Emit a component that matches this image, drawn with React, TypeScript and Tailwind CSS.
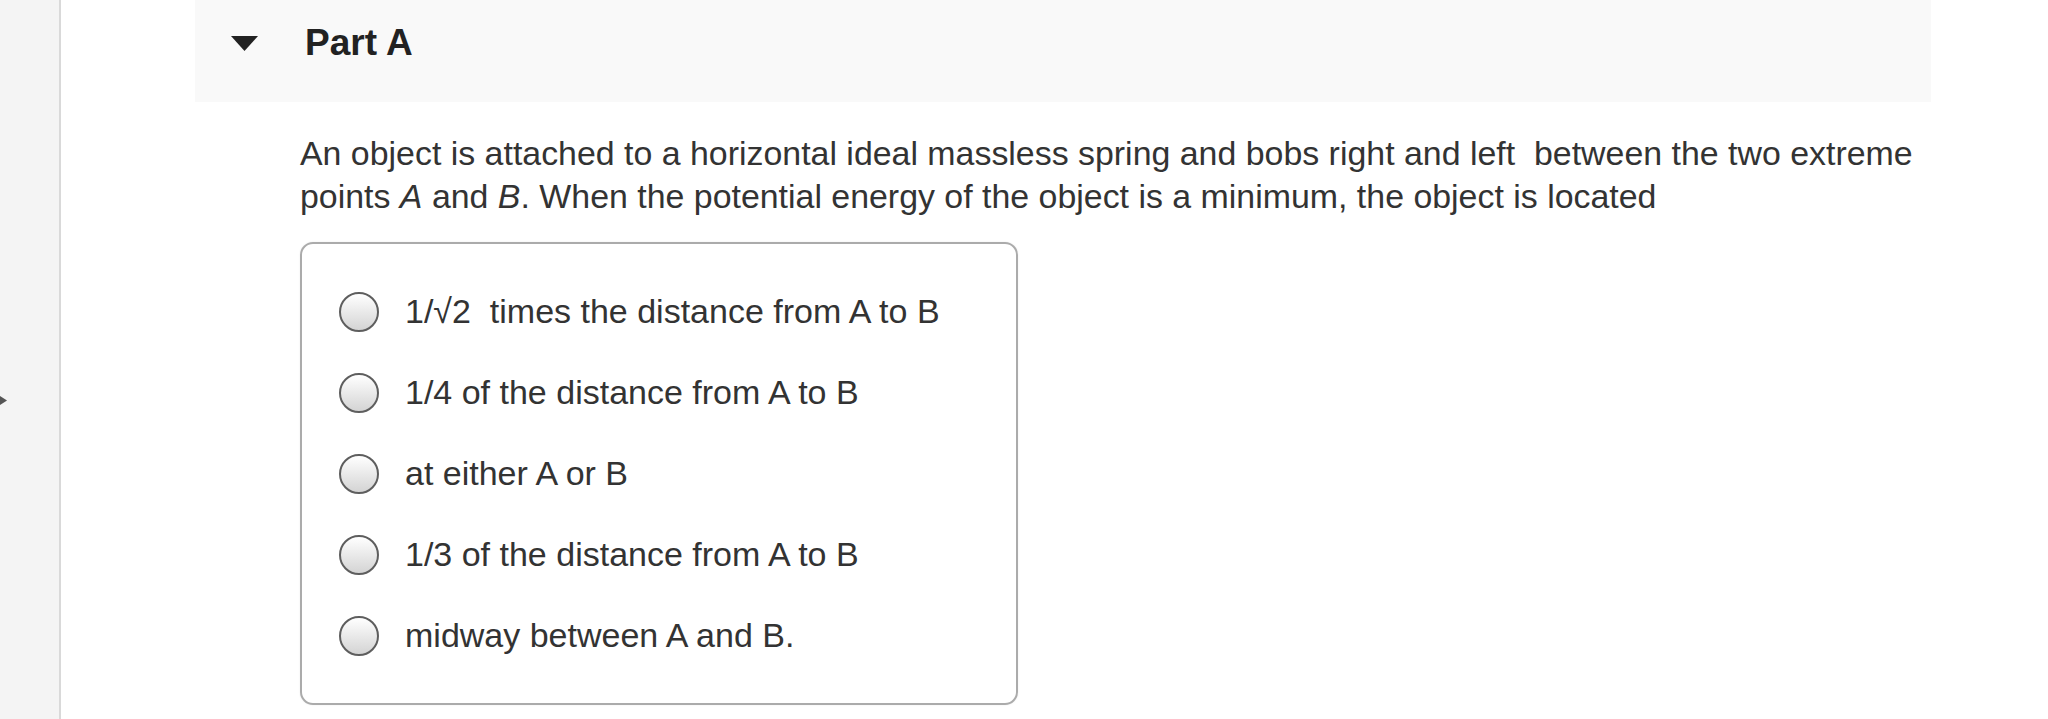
import React from "react"

const options = [
	"1/\u221A2\u00A0 times the distance from A to B",
	"1/4 of the distance from A to B",
	"at either A or B",
	"1/3 of the distance from A to B",
	"midway between A and B.",
]

const Radio = () => (
	<span className="block h-[40px] w-[40px] shrink-0 rounded-full border-2 border-[#5e5e5e] bg-linear-to-b from-white to-[#d4d4d4]" />
)

export default function App() {
	return (
		<div className="flex h-[719px] w-full overflow-hidden bg-white font-['Liberation_Sans',Arial,sans-serif]">
			<aside className="w-[61px] shrink-0 border-r-2 border-[#d9d9d9] bg-[#f4f4f4] pt-[396px]">
				<svg width="7" height="9" viewBox="0 0 7 9">
					<path d="M0 0 L7 4.5 L0 9 Z" fill="#555" />
				</svg>
			</aside>
			<main className="ml-[134px] w-[1736px] shrink-0">
				<header className="flex h-[102px] items-center bg-[#f9f9f9] pb-[16px]">
					<svg className="ml-[36px]" width="27" height="15" viewBox="0 0 27 15">
						<path d="M0 0 H27 L13.5 15 Z" fill="#222" />
					</svg>
					<h2 className="ml-[47px] text-[37px] font-bold text-[#222]">Part A</h2>
				</header>
				<section className="pl-[105px] pt-[30px]">
					<p className="whitespace-nowrap text-[33.9px] leading-[43px] text-[#333]">
						An object is attached to a horizontal ideal massless spring and bobs right and left&nbsp; between the two extreme
						<br />
						points <i>A</i> and <i>B</i>. When the potential energy of the object is a minimum, the object is located
					</p>
					<div className="mt-[24px] w-[718px] rounded-[13px] border-2 border-[#ababab] py-[27px] pl-[37px] shadow-[0_0_2px_rgba(0,0,0,0.08)]">
						{options.map((opt) => (
							<label key={opt} className="flex h-[81px] items-center gap-[26px]">
								<Radio />
								<span className="whitespace-nowrap text-[34px] text-[#333]">{opt}</span>
							</label>
						))}
					</div>
				</section>
			</main>
		</div>
	)
}
